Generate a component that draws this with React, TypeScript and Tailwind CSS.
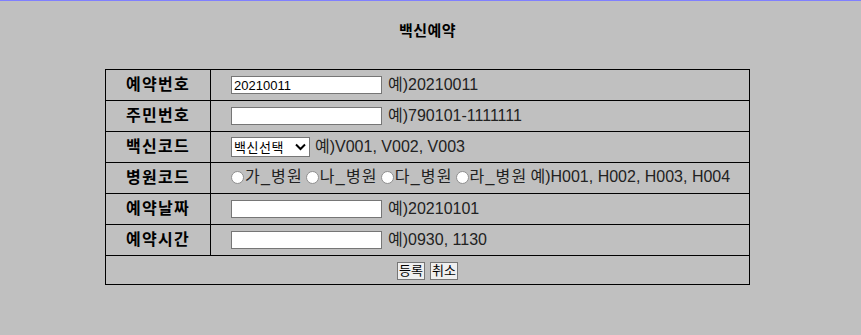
import React from 'react';

const font = { fontFamily: '"Liberation Sans", "Noto Sans CJK KR", sans-serif' };

const rows: { label: string; kind: 'text' | 'select' | 'radio'; value?: string; hint: string }[] = [
  { label: '예약번호', kind: 'text', value: '20210011', hint: '예)20210011' },
  { label: '주민번호', kind: 'text', hint: '예)790101-1111111' },
  { label: '백신코드', kind: 'select', hint: '예)V001, V002, V003' },
  { label: '병원코드', kind: 'radio', hint: '예)H001, H002, H003, H004' },
  { label: '예약날짜', kind: 'text', hint: '예)20210101' },
  { label: '예약시간', kind: 'text', hint: '예)0930, 1130' },
];

const hospitals = ['가_병원', '나_병원', '다_병원', '라_병원'];

function TextBox({ value }: { value?: string }) {
  return (
    <input
      type="text"
      defaultValue={value}
      className="w-[151px] h-[18px] bg-white border border-[#767676] px-[2px] text-[13px] leading-none text-black outline-none align-middle"
    />
  );
}

function VaccineSelect() {
  return (
    <span className="inline-flex items-center h-[20px] w-[79px] bg-white border border-[#767676] pl-[2px] pr-[3px] align-middle">
      <span className="text-[13px] leading-none text-black tracking-[0.5px]">백신선택</span>
      <svg className="ml-auto w-[11px] h-[8px]" viewBox="0 0 11 8" fill="none" stroke="#000" strokeWidth={2}>
        <path d="M1 1.5l4.5 4.5L10 1.5" />
      </svg>
    </span>
  );
}

function Radio({ label }: { label: string }) {
  return (
    <span className="inline-flex items-center">
      <span className="inline-block w-[13px] h-[13px] rounded-full bg-white border border-[#8f8f8f] mr-[1px]" />
      <span className="tracking-[1.2px]">{label}</span>
    </span>
  );
}

export default function App() {
  return (
    <div className="min-h-[335px] bg-[#c0c0c0] border-t border-[#8080ff] text-black" style={font}>
      <div className="w-[855px]">
        <h2 className="pt-[20px] text-center text-[15px] font-bold leading-[20px] tracking-[0.5px]">백신예약</h2>
        <table className="mx-auto mt-[28px] w-[645px] border-collapse border border-black">
          <tbody>
            {rows.map((r) => (
              <tr key={r.label} className="h-[31px]">
                <th className="w-[105px] border border-black text-center text-[16px] font-bold tracking-[1.3px]">{r.label}</th>
                <td className="border border-black pl-[20px] text-[16px] text-[#222]">
                  {r.kind === 'text' && (
                    <span className="inline-flex items-center gap-[6px]">
                      <TextBox value={r.value} />
                      <span>{r.hint}</span>
                    </span>
                  )}
                  {r.kind === 'select' && (
                    <span className="inline-flex items-center gap-[5px]">
                      <VaccineSelect />
                      <span>{r.hint}</span>
                    </span>
                  )}
                  {r.kind === 'radio' && (
                    <span className="inline-flex items-center gap-[3px]">
                      {hospitals.map((h) => (
                        <Radio key={h} label={h} />
                      ))}
                      <span>{r.hint}</span>
                    </span>
                  )}
                </td>
              </tr>
            ))}
            <tr className="h-[29px]">
              <td colSpan={2} className="border border-black text-center">
                <span className="inline-flex gap-[5px]">
                  <button className="h-[18px] px-[1px] border border-[#767676] bg-[#efefef] text-[13px] leading-none">등록</button>
                  <button className="h-[18px] px-[1px] border border-[#767676] bg-[#efefef] text-[13px] leading-none">취소</button>
                </span>
              </td>
            </tr>
          </tbody>
        </table>
      </div>
    </div>
  );
}
